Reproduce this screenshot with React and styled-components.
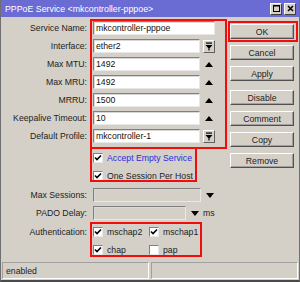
import React from 'react';
import styled, { createGlobalStyle } from 'styled-components';

const Global = createGlobalStyle`
  html, body { margin: 0; padding: 0; background: #d4d0c8; }
  body { font-family: "Liberation Sans", Arial, sans-serif; font-size: 8.7px; color: #222; }
`;

const Window = styled.div`
  position: relative;
  width: 300px;
  height: 282px;
  box-sizing: border-box;
  background: #d4d0c8;
  border-left: 1px solid #6f6f6f;
  border-right: 1px solid #6f6f6f;
  border-bottom: 2px solid #4a4a4a;
  display: flex;
  flex-direction: column;
  overflow: hidden;
`;

const TitleBar = styled.div`
  height: 17px;
  background: #6a6bd3;
  color: #fff;
  display: flex;
  align-items: center;
  padding: 0 3px 0 4px;
  font-size: 8.8px;
`;

const TitleText = styled.span`
  flex: 1;
`;

const TitleButton = styled.div`
  width: 10px;
  height: 10px;
  margin-left: 2px;
  background: #d4d0c8;
  border: 1px solid #fff;
  border-right-color: #404040;
  border-bottom-color: #404040;
  display: flex;
  align-items: center;
  justify-content: center;
`;

const Body = styled.div`
  display: flex;
  flex: 1;
`;

const Form = styled.div`
  width: 229px;
  display: flex;
  flex-direction: column;
  padding-top: 4px;
`;

const Row = styled.div`
  display: flex;
  align-items: center;
  height: 14px;
  margin-top: ${p => p.$top ?? 4}px;
`;

const Label = styled.div`
  width: 92px;
  flex-shrink: 0;
  text-align: right;
  padding-right: 6px;
  box-sizing: border-box;
  white-space: nowrap;
`;

const Input = styled.div`
  width: ${p => p.$w}px;
  height: 14px;
  box-sizing: border-box;
  background: ${p => (p.$disabled ? '#d4d0c8' : '#fff')};
  border: 1px solid #808080;
  border-right-color: #e8e8e8;
  border-bottom-color: #e8e8e8;
  box-shadow: inset 1px 1px 0 #d8d8d8;
  padding-left: 2px;
  display: flex;
  align-items: center;
  white-space: nowrap;
  overflow: hidden;
  color: #101010;
`;

const DropButton = styled.div`
  width: 12px;
  height: 13px;
  margin-left: 3px;
  box-sizing: border-box;
  border: 1px solid #fff;
  border-right-color: #606060;
  border-bottom-color: #606060;
  display: flex;
  align-items: center;
  justify-content: center;
`;

const ArrowSlot = styled.div`
  width: 12px;
  margin-left: 3px;
  display: flex;
  align-items: center;
  justify-content: center;
`;

const Unit = styled.span`
  margin-left: 2px;
`;

const CheckRow = styled(Row)`
  padding-left: 92px;
`;

const CheckItem = styled.div`
  display: flex;
  align-items: center;
  width: ${p => p.$w || 'auto'};
  color: ${p => (p.$blue ? '#2a2ae0' : 'inherit')};
`;

const Box = styled.div`
  width: 10px;
  height: 10px;
  box-sizing: border-box;
  background: #fff;
  border: 1px solid #808080;
  border-right-color: #e8e8e8;
  border-bottom-color: #e8e8e8;
  margin-right: 4px;
  display: flex;
  align-items: center;
  justify-content: center;
`;

const Buttons = styled.div`
  display: flex;
  flex-direction: column;
  padding-top: 7px;
  width: 64px;
`;

const Button = styled.div`
  height: 15px;
  box-sizing: border-box;
  margin-bottom: ${p => p.$gap ?? 6}px;
  background: #d4d0c8;
  border: 1px solid #fff;
  border-right-color: #505050;
  border-bottom-color: #505050;
  box-shadow: inset -1px -1px 0 #a0a0a0;
  display: flex;
  align-items: center;
  justify-content: center;
`;

const StatusBar = styled.div`
  display: flex;
  gap: 2px;
  padding: 0 1px 1px 1px;
  height: 17px;
`;

const StatusCell = styled.div`
  flex: 1;
  box-sizing: border-box;
  border: 1px solid #a0a0a0;
  border-right-color: #fff;
  border-bottom-color: #fff;
  padding-left: 3px;
  display: flex;
  align-items: center;
`;

const Highlight = styled.div`
  position: absolute;
  left: ${p => p.$x}px;
  top: ${p => p.$y}px;
  width: ${p => p.$w}px;
  height: ${p => p.$h}px;
  box-sizing: border-box;
  border: 2px solid #f20d0d;
  pointer-events: none;
`;

const Check = () => (
  <svg width="8" height="8" viewBox="0 0 8 8">
    <path d="M1 3.5 L3 5.5 L7 1.5" stroke="#000" strokeWidth="1.6" fill="none" />
  </svg>
);

const ListIcon = () => (
  <svg width="8" height="9" viewBox="0 0 8 9">
    <rect x="1" y="0.5" width="6" height="1.2" fill="#000" />
    <path d="M0.5 3 L7.5 3 L4 7 Z" fill="#000" />
    <rect x="3.4" y="6.5" width="1.2" height="2" fill="#000" />
  </svg>
);

const Tri = ({ up }) => (
  <svg width="8" height="5" viewBox="0 0 8 5">
    <path d={up ? 'M0 5 L8 5 L4 0 Z' : 'M0 0 L8 0 L4 5 Z'} fill="#000" />
  </svg>
);

const Field = ({ label, value, w = 107, tail }) => (
  <Row>
    <Label>{label}</Label>
    <Input $w={w}>{value}</Input>
    {tail === 'list' && <DropButton><ListIcon /></DropButton>}
    {tail === 'up' && <ArrowSlot><Tri up /></ArrowSlot>}
  </Row>
);

export default function App() {
  return (
    <Window>
      <Global />
      <TitleBar>
        <TitleText>PPPoE Service &lt;mkcontroller-pppoe&gt;</TitleText>
        <TitleButton>
          <svg width="7" height="7" viewBox="0 0 7 7"><rect x="0.5" y="0.5" width="6" height="6" fill="none" stroke="#000" /><rect x="0" y="0" width="7" height="1.5" fill="#000" /></svg>
        </TitleButton>
        <TitleButton>
          <svg width="7" height="7" viewBox="0 0 7 7"><path d="M1 1 L6 6 M6 1 L1 6" stroke="#000" strokeWidth="1.5" /></svg>
        </TitleButton>
      </TitleBar>
      <Body>
        <Form>
          <Row $top={0}>
            <Label>Service Name:</Label>
            <Input $w={122}>mkcontroller-pppoe</Input>
          </Row>
          <Field label="Interface:" value="ether2" tail="list" />
          <Field label="Max MTU:" value="1492" tail="up" />
          <Field label="Max MRU:" value="1492" tail="up" />
          <Field label="MRRU:" value="1500" tail="up" />
          <Field label="Keepalive Timeout:" value="10" tail="up" />
          <Field label="Default Profile:" value="mkcontroller-1" tail="list" />
          <CheckRow $top={8}>
            <CheckItem $blue><Box><Check /></Box>Accept Empty Service</CheckItem>
          </CheckRow>
          <CheckRow>
            <CheckItem><Box><Check /></Box>One Session Per Host</CheckItem>
          </CheckRow>
          <Row $top={5}>
            <Label>Max Sessions:</Label>
            <Input $w={108} $disabled />
            <ArrowSlot><Tri /></ArrowSlot>
          </Row>
          <Row>
            <Label>PADO Delay:</Label>
            <Input $w={93} $disabled />
            <ArrowSlot><Tri /></ArrowSlot>
            <Unit>ms</Unit>
          </Row>
          <Row $top={5}>
            <Label>Authentication:</Label>
            <CheckItem $w="56px"><Box><Check /></Box>mschap2</CheckItem>
            <CheckItem><Box><Check /></Box>mschap1</CheckItem>
          </Row>
          <CheckRow>
            <CheckItem $w="56px"><Box><Check /></Box>chap</CheckItem>
            <CheckItem><Box />pap</CheckItem>
          </CheckRow>
        </Form>
        <Buttons>
          <Button>OK</Button>
          <Button>Cancel</Button>
          <Button $gap={9}>Apply</Button>
          <Button>Disable</Button>
          <Button>Comment</Button>
          <Button>Copy</Button>
          <Button>Remove</Button>
        </Buttons>
      </Body>
      <StatusBar>
        <StatusCell>enabled</StatusCell>
        <StatusCell />
      </StatusBar>
      <Highlight $x={89} $y={19} $w={137} $h={130} />
      <Highlight $x={89} $y={147} $w={107} $h={35} />
      <Highlight $x={227} $y={21} $w={70} $h={21} />
      <Highlight $x={89} $y={222} $w={112} $h={35} />
    </Window>
  );
}
